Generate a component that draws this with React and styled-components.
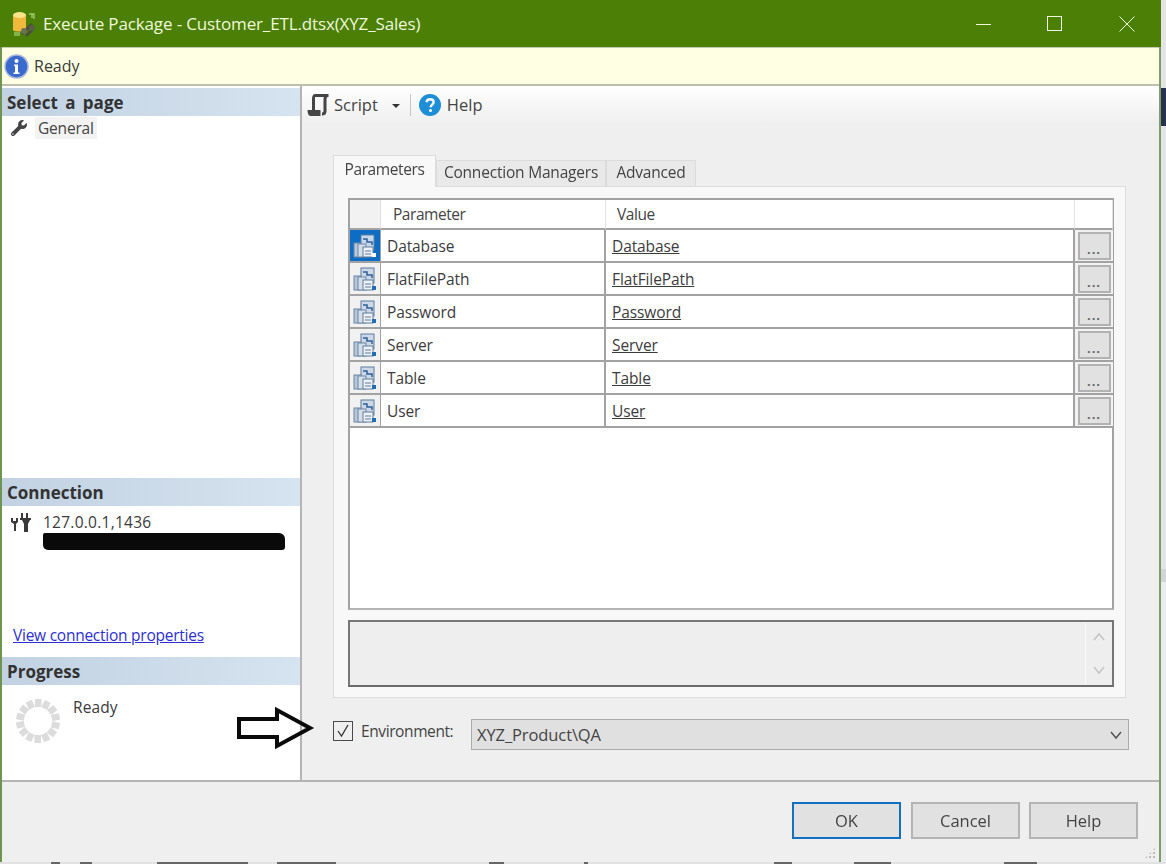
import React from 'react'
import styled, { createGlobalStyle } from 'styled-components'
import { FaWrench } from 'react-icons/fa'

const Global = createGlobalStyle`
  html, body { margin: 0; padding: 0; background: #e6e6e6; }
  body { font-family: "Open Sans", "Noto Sans", sans-serif; color: #3a3a3a; }
`

const Page = styled.div`
  position: relative;
  width: 1166px;
  height: 864px;
  overflow: hidden;
  filter: blur(0.3px);
`
const Top = styled.div`
  display: flex;
  height: 862px;
`
const Window = styled.div`
  width: 1161px;
  display: flex;
  flex-direction: column;
  border-left: 2px solid #6f9450;
  border-right: 2px solid #7f9c70;
  box-sizing: border-box;
  background: #efefef;
`
const Side = styled.div`
  flex: 1;
  background: linear-gradient(#e4e4e4 0 66%, #d4d4d4 66% 67.5%, #ececec 67.5%);
`
const DarkBand = styled.div`
  height: 38px;
  margin-top: 88px;
  background: #26324a;
`
const Sliver = styled.div`
  height: 2px;
  display: flex;
  background: #e2e2e2;
`
const Fleck = styled.span`
  width: ${p => p.$w}px;
  margin-left: ${p => p.$m}px;
  background: #666;
`

const TitleBar = styled.div`
  height: 47px;
  margin: 0 -2px;
  padding-left: 12px;
  display: flex;
  align-items: center;
  background: #4b7f05;
  color: #f0f7dc;
  font-size: 17px;
  flex-shrink: 0;
`
const TitleText = styled.span`
  margin-left: 5px;
  flex: 1;
  letter-spacing: -0.14px;
`
const WinButton = styled.div`
  width: 24px;
  height: 24px;
  margin-right: ${p => p.$mr}px;
  display: flex;
  align-items: center;
  justify-content: center;
`
const InfoBar = styled.div`
  height: 39px;
  display: flex;
  align-items: center;
  gap: 5px;
  padding-left: 2px;
  background: #ffffe3;
  font-size: 16px;
  border-top: 1px solid #c6cbb0;
  border-bottom: 2px solid #bcc0ae;
  flex-shrink: 0;
  box-sizing: border-box;
`
const Body = styled.div`
  flex: 1;
  display: flex;
  min-height: 0;
  border-bottom: 2px solid #b4b4b4;
`
const LeftPane = styled.div`
  width: 298px;
  flex-shrink: 0;
  display: flex;
  flex-direction: column;
  background: #fff;
  border-right: 2px solid #b4b4b4;
`
const PaneHeader = styled.div`
  height: 28px;
  margin-top: ${p => p.$mt || 0}px;
  display: flex;
  align-items: center;
  padding-left: 5px;
  font-size: 17px;
  font-weight: 700;
  word-spacing: 3px;
  color: #333;
  background: linear-gradient(90deg, #c2d2e2, #d6e3f0);
  flex-shrink: 0;
`
const PageItem = styled.div`
  height: 24px;
  display: flex;
  align-items: center;
  padding-left: 9px;
  gap: 8px;
  font-size: 15.5px;
  color: #444;
`
const PageName = styled.span`
  background: #f3f3f3;
  padding: 0 3px;
  letter-spacing: -0.2px;
`
const Grow = styled.div`
  flex: 1;
`
const ConnBody = styled.div`
  height: 151px;
  display: flex;
  flex-direction: column;
  flex-shrink: 0;
  box-sizing: border-box;
  padding: 6px 0 11px 9px;
`
const ConnRow = styled.div`
  display: flex;
  gap: 10px;
`
const ConnLines = styled.div`
  display: flex;
  flex-direction: column;
`
const Server = styled.span`
  font-size: 15.5px;
  line-height: 20px;
  letter-spacing: 0.25px;
`
const Redacted = styled.div`
  width: 242px;
  height: 17px;
  margin-top: 1px;
  background: #0a0a0a;
  border-radius: 2px 6px 3px 5px;
`
const PropsLink = styled.a`
  margin: auto 0 0 2px;
  font-size: 15.5px;
  color: #2d2fd0;
  text-decoration: underline;
  letter-spacing: -0.25px;
`
const ProgressBody = styled.div`
  height: 95px;
  display: flex;
  flex-shrink: 0;
  padding: 11px 0 0 11px;
  gap: 10px;
  box-sizing: border-box;
`
const ProgressText = styled.span`
  margin-top: 1px;
  font-size: 15.5px;
  line-height: 20px;
  letter-spacing: 0.1px;
`

const RightPane = styled.div`
  flex: 1;
  display: flex;
  flex-direction: column;
  min-width: 0;
`
const Toolbar = styled.div`
  height: 37px;
  flex-shrink: 0;
  display: flex;
  align-items: center;
  padding-left: 5px;
  font-size: 16.5px;
  color: #444;
  background: linear-gradient(#fff, #efefef);
`
const ToolLabel = styled.span`
  margin-left: ${p => p.$ml}px;
`
const Caret = styled.span`
  width: 0;
  height: 0;
  margin: 2px 0 0 14px;
  border-left: 4px solid transparent;
  border-right: 4px solid transparent;
  border-top: 4px solid #333;
`
const ToolSep = styled.span`
  width: 1px;
  height: 22px;
  margin: 0 8px 0 10px;
  background: #c5c5c5;
`
const Content = styled.div`
  flex: 1;
  padding: 33px 30px 0 31px;
  display: flex;
  flex-direction: column;
`
const Tabs = styled.div`
  display: flex;
  height: 31px;
  align-items: flex-end;
  flex-shrink: 0;
  margin-bottom: -1px;
  position: relative;
`
const Tab = styled.div`
  height: ${p => (p.$active ? 32 : 27)}px;
  width: ${p => p.$w}px;
  box-sizing: border-box;
  display: flex;
  align-items: center;
  justify-content: center;
  font-size: 15.5px;
  letter-spacing: ${p => (p.$active ? -0.4 : -0.2)}px;
  color: #444;
  padding-bottom: ${p => (p.$active ? 5 : 3)}px;
  background: ${p => (p.$active ? '#f8f8f8' : '#e9e9e9')};
  border: 1px solid #dcdcdc;
  border-bottom: ${p => (p.$active ? 'none' : '1px solid #dcdcdc')};
`
const TabPanel = styled.div`
  width: 793px;
  height: 512px;
  box-sizing: border-box;
  padding: 11px 11px 11px 14px;
  background: #f8f8f8;
  border: 1px solid #dcdcdc;
  display: flex;
  flex-direction: column;
`
const ParamGrid = styled.div`
  height: 412px;
  flex-shrink: 0;
  box-sizing: border-box;
  border: 2px solid #a2a2a2;
  border-bottom-color: #b4b4b4;
  background: #fff;
  display: grid;
  grid-template-columns: 31px 225px 469px 38px;
  grid-template-rows: 30px repeat(6, 33px);
  align-content: start;
`
const HeadCell = styled.div`
  display: flex;
  align-items: center;
  padding-left: ${p => p.$pl || 0}px;
  font-size: 15.5px;
  letter-spacing: -0.45px;
  color: #444;
  border-right: 1px solid #e0e0e0;
  border-bottom: 2px solid #a2a2a2;
  background: ${p => (p.$corner ? '#f2f2f2' : '#fff')};
`
const IconCell = styled.div`
  display: flex;
  align-items: center;
  justify-content: center;
  background: ${p => (p.$active ? '#0d6dc4' : '#f1f1f1')};
  border-right: 1px solid #a2a2a2;
  border-bottom: 2px solid #a2a2a2;
`
const Cell = styled.div`
  display: flex;
  align-items: center;
  padding-left: ${p => p.$pl}px;
  font-size: 15.5px;
  letter-spacing: -0.1px;
  color: #3c3c3c;
  border-right: 2px solid #a2a2a2;
  border-bottom: 2px solid #a2a2a2;
`
const ValueText = styled.span`
  text-decoration: underline;
`
const ButtonCell = styled.div`
  display: flex;
  align-items: center;
  justify-content: center;
  background: #f2f2f2;
  border-bottom: 2px solid #a2a2a2;
`
const EllipsisButton = styled.div`
  width: 33px;
  height: 28px;
  box-sizing: border-box;
  border: 2px solid #b2b2b2;
  background: #e1e1e1;
  display: flex;
  align-items: flex-end;
  justify-content: center;
  font-size: 13px;
  font-weight: 700;
  line-height: 18px;
  letter-spacing: 1px;
  color: #666;
`
const DetailBox = styled.div`
  height: 67px;
  flex-shrink: 0;
  margin-top: 10px;
  box-sizing: border-box;
  border: 2px solid #777;
  border-bottom-color: #6a6a6a;
  background: #eeeeee;
  display: flex;
  justify-content: flex-end;
`
const ScrollBar = styled.div`
  width: 26px;
  border-left: 1px solid #f8f8f8;
  padding: 8px 0;
  display: flex;
  flex-direction: column;
  justify-content: space-between;
  align-items: center;
`
const EnvRow = styled.div`
  display: flex;
  align-items: center;
  margin-top: 21px;
  height: 31px;
`
const CheckBox = styled.div`
  width: 20px;
  height: 20px;
  margin-bottom: 7px;
  box-sizing: border-box;
  border: 1.5px solid #4a4a4a;
  display: flex;
  align-items: center;
  justify-content: center;
  flex-shrink: 0;
`
const EnvLabel = styled.span`
  width: 110px;
  margin: 0 0 7px 8px;
  font-size: 15.5px;
  letter-spacing: -0.4px;
  color: #444;
`
const Select = styled.div`
  width: 658px;
  height: 31px;
  flex-shrink: 0;
  box-sizing: border-box;
  display: flex;
  align-items: center;
  justify-content: space-between;
  padding: 0 5px 0 5px;
  background: #e0e0e0;
  border: 1px solid #ababab;
  font-size: 16.5px;
  letter-spacing: -0.1px;
  color: #444;
`
const Footer = styled.div`
  position: relative;
  height: 80px;
  flex-shrink: 0;
  box-sizing: border-box;
  padding: 20px 21px 0 0;
  display: flex;
  justify-content: flex-end;
  align-items: flex-start;
  gap: 9px;
`
const DialogButton = styled.div`
  width: 109px;
  height: 37px;
  box-sizing: border-box;
  display: flex;
  align-items: center;
  justify-content: center;
  background: #e1e1e1;
  font-size: 16.5px;
  color: #444;
  margin-right: ${p => (p.$primary ? 1 : 0)}px;
  border: ${p => (p.$primary ? '2px solid #1170c0' : '2px solid #b4b4b4')};
`
const Grip = styled.div`
  position: absolute;
  right: 3px;
  bottom: 3px;
  width: 12px;
  height: 12px;
  background-image: radial-gradient(#bbb 1.2px, transparent 1.3px);
  background-size: 4px 4px;
  clip-path: polygon(100% 0, 100% 100%, 0 100%);
`
const ArrowMark = styled.svg`
  position: absolute;
  left: 235px;
  top: 706px;
`

const PackageIcon = () => (
  <svg width="26" height="26" viewBox="0 0 26 26">
    <path d="M1 4v15c0 2 13 2 13 0V4z" fill="#f0b93c" />
    <ellipse cx="7.500" cy="4" rx="6.500" ry="3" fill="#fbe38c" />
    <path d="M17 3h5v5M20 3v4" stroke="#9ec36a" strokeWidth="1.500" fill="none" />
    <path d="M2 21h6v4H2z" fill="#86b24b" />
    <path d="M10 23l10-10M14 25l8-8" stroke="#4a4f3a" strokeWidth="3" />
    <circle cx="12" cy="20" r="3" fill="#6a6f55" />
    <circle cx="20" cy="17" r="3" fill="#5a5f48" />
  </svg>
)
const InfoIcon = () => (
  <svg width="25" height="25" viewBox="0 0 25 25">
    <circle cx="12.500" cy="12.500" r="11.500" fill="#3a6bcc" stroke="#a9b5dc" strokeWidth="1.500" />
    <circle cx="12.500" cy="7" r="2" fill="#fff" />
    <path d="M10 10.500h4v8h1.500v1.500h-6v-1.500h1.500v-6.500h-1z" fill="#fff" />
  </svg>
)
const ScriptIcon = () => (
  <svg width="23" height="24" viewBox="0 0 22 24" fill="none" stroke="#444" strokeWidth="3">
    <path d="M21 2.500H8C6 2.500 6 4 6 6v13" />
    <path d="M20 2.500c-2 0-2.500 2-2.500 4v11.500c0 2-1 3-3 3" />
    <path d="M0 17h13v6H3c-2 0-3-3-3-6z" fill="#444" stroke="none" />
  </svg>
)
const HelpIcon = () => (
  <svg width="22" height="22" viewBox="0 0 22 22">
    <circle cx="11" cy="11" r="11" fill="#1e8fd6" />
    <path d="M7.500 8.200c.3-2 1.800-3 3.600-3 2 0 3.500 1.200 3.500 3 0 2.600-3 2.500-3 5" fill="none" stroke="#fff" strokeWidth="2.400" />
    <circle cx="11.500" cy="16.500" r="1.500" fill="#fff" />
  </svg>
)
const PlugIcon = () => (
  <svg width="22" height="22" viewBox="0 0 22 22" fill="#3a3a3a">
    <path d="M0 6h2v3h3V6h2v4l-2 2v7H3v-7L0 10z" />
    <path d="M10 1h2v5h3V1h2v5h3v2h-1l-2 4v8h-4v-8l-2-4h-2V6h1z" />
  </svg>
)
const ParamIcon = ({ active }) => (
  <svg width="26" height="26" viewBox="0 0 26 26">
    <rect x="9" y="2" width="13" height="15" fill={active ? '#c6d8ec' : '#ccd8e6'} stroke="#5f7c9e" />
    <path d="M11 6h4v3h5v3" fill="none" stroke="#2f5f98" strokeWidth="1.500" />
    <rect x="2" y="10" width="7" height="14" fill="#b7c7d9" stroke="#6d86a3" />
    <rect x="6" y="11" width="8" height="13" fill="#d5dfea" stroke="#6d86a3" />
    <rect x="11" y="14" width="10" height="10" fill="#eef2f6" stroke="#5f7c9e" />
    <path d="M13 18h6M13 21h6" stroke="#5f7c9e" />
    <rect x="20" y="20" width="4" height="4" fill={active ? '#fff' : '#1f6cb8'} />
  </svg>
)
const Spinner = () => (
  <svg width="50" height="50" viewBox="0 0 50 50">
    {Array.from({ length: 14 }).map((_, i) => (
      <rect key={i} x="22" y="3" width="6.500" height="8" fill="#dcdcdc" transform={`rotate(${(i * 360) / 14} 25 25)`} />
    ))}
  </svg>
)
const Chevron = ({ up, color, size = 14 }) => (
  <svg width={size} height={size} viewBox="0 0 14 14" fill="none" stroke={color} strokeWidth="1.500">
    <path d={up ? 'M2 10l5-6 5 6' : 'M2 4l5 6 5-6'} />
  </svg>
)

const params = ['Database', 'FlatFilePath', 'Password', 'Server', 'Table', 'User']

// bits of the window behind the dialog showing under its bottom edge
const flecks = [[51, 9], [20, 12], [65, 91], [29, 59], [153, 15], [80, 4], [186, 18], [62, 37], [113, 33]]

const App = () => (
  <Page>
    <Global />
    <Top>
      <Window>
        <TitleBar>
          <PackageIcon />
          <TitleText>Execute Package - Customer_ETL.dtsx(XYZ_Sales)</TitleText>
          <WinButton $mr={48}>
            <svg width="16" height="16"><path d="M1 8.500h15" stroke="#f0f7dc" /></svg>
          </WinButton>
          <WinButton $mr={48}>
            <svg width="16" height="16"><rect x="0.500" y="0.500" width="14" height="14" fill="none" stroke="#f0f7dc" /></svg>
          </WinButton>
          <WinButton $mr={22}>
            <svg width="16" height="16"><path d="M0.500 0.500l15 15M15.500 0.500l-15 15" stroke="#f0f7dc" /></svg>
          </WinButton>
        </TitleBar>
        <InfoBar>
          <InfoIcon />
          Ready
        </InfoBar>
        <Body>
          <LeftPane>
            <PaneHeader $mt={2}>Select a page</PaneHeader>
            <PageItem>
              <FaWrench size={16} color="#444" />
              <PageName>General</PageName>
            </PageItem>
            <Grow />
            <PaneHeader>Connection</PaneHeader>
            <ConnBody>
              <ConnRow>
                <PlugIcon />
                <ConnLines>
                  <Server>127.0.0.1,1436</Server>
                  <Redacted />
                </ConnLines>
              </ConnRow>
              <PropsLink>View connection properties</PropsLink>
            </ConnBody>
            <PaneHeader>Progress</PaneHeader>
            <ProgressBody>
              <Spinner />
              <ProgressText>Ready</ProgressText>
            </ProgressBody>
          </LeftPane>
          <RightPane>
            <Toolbar>
              <ScriptIcon />
              <ToolLabel $ml={4}>Script</ToolLabel>
              <Caret />
              <ToolSep />
              <HelpIcon />
              <ToolLabel $ml={6}>Help</ToolLabel>
            </Toolbar>
            <Content>
              <Tabs>
                <Tab $active $w={103}>Parameters</Tab>
                <Tab $w={170}>Connection Managers</Tab>
                <Tab $w={90}>Advanced</Tab>
              </Tabs>
              <TabPanel>
                <ParamGrid>
                  <HeadCell $corner />
                  <HeadCell $pl={12}>Parameter</HeadCell>
                  <HeadCell $pl={11}>Value</HeadCell>
                  <HeadCell />
                  {params.map((name, i) => (
                    <React.Fragment key={name}>
                      <IconCell $active={i === 0}><ParamIcon active={i === 0} /></IconCell>
                      <Cell $pl={6}>{name}</Cell>
                      <Cell $pl={6}><ValueText>{name}</ValueText></Cell>
                      <ButtonCell><EllipsisButton>...</EllipsisButton></ButtonCell>
                    </React.Fragment>
                  ))}
                </ParamGrid>
                <DetailBox>
                  <ScrollBar>
                    <Chevron up color="#c4c4c4" />
                    <Chevron color="#c4c4c4" />
                  </ScrollBar>
                </DetailBox>
              </TabPanel>
              <EnvRow>
                <CheckBox>
                  <svg width="14" height="14" viewBox="0 0 14 14"><path d="M2 7l3.500 5L12 1" fill="none" stroke="#333" strokeWidth="1.300" /></svg>
                </CheckBox>
                <EnvLabel>Environment:</EnvLabel>
                <Select>
                  XYZ_Product\QA
                  <Chevron color="#555" />
                </Select>
              </EnvRow>
            </Content>
          </RightPane>
        </Body>
        <Footer>
          <DialogButton $primary>OK</DialogButton>
          <DialogButton>Cancel</DialogButton>
          <DialogButton>Help</DialogButton>
          <Grip />
        </Footer>
      </Window>
      <Side><DarkBand /></Side>
    </Top>
    <Sliver>
      {flecks.map(([m, w], i) => <Fleck key={i} $m={m} $w={w} />)}
    </Sliver>
    <ArrowMark width="80" height="44" viewBox="0 0 80 44">
      <path d="M4 13h38V4l33 18-33 18v-9H4z" fill="none" stroke="#0a0a0a" strokeWidth="4" strokeLinejoin="miter" />
    </ArrowMark>
  </Page>
)

export default App
